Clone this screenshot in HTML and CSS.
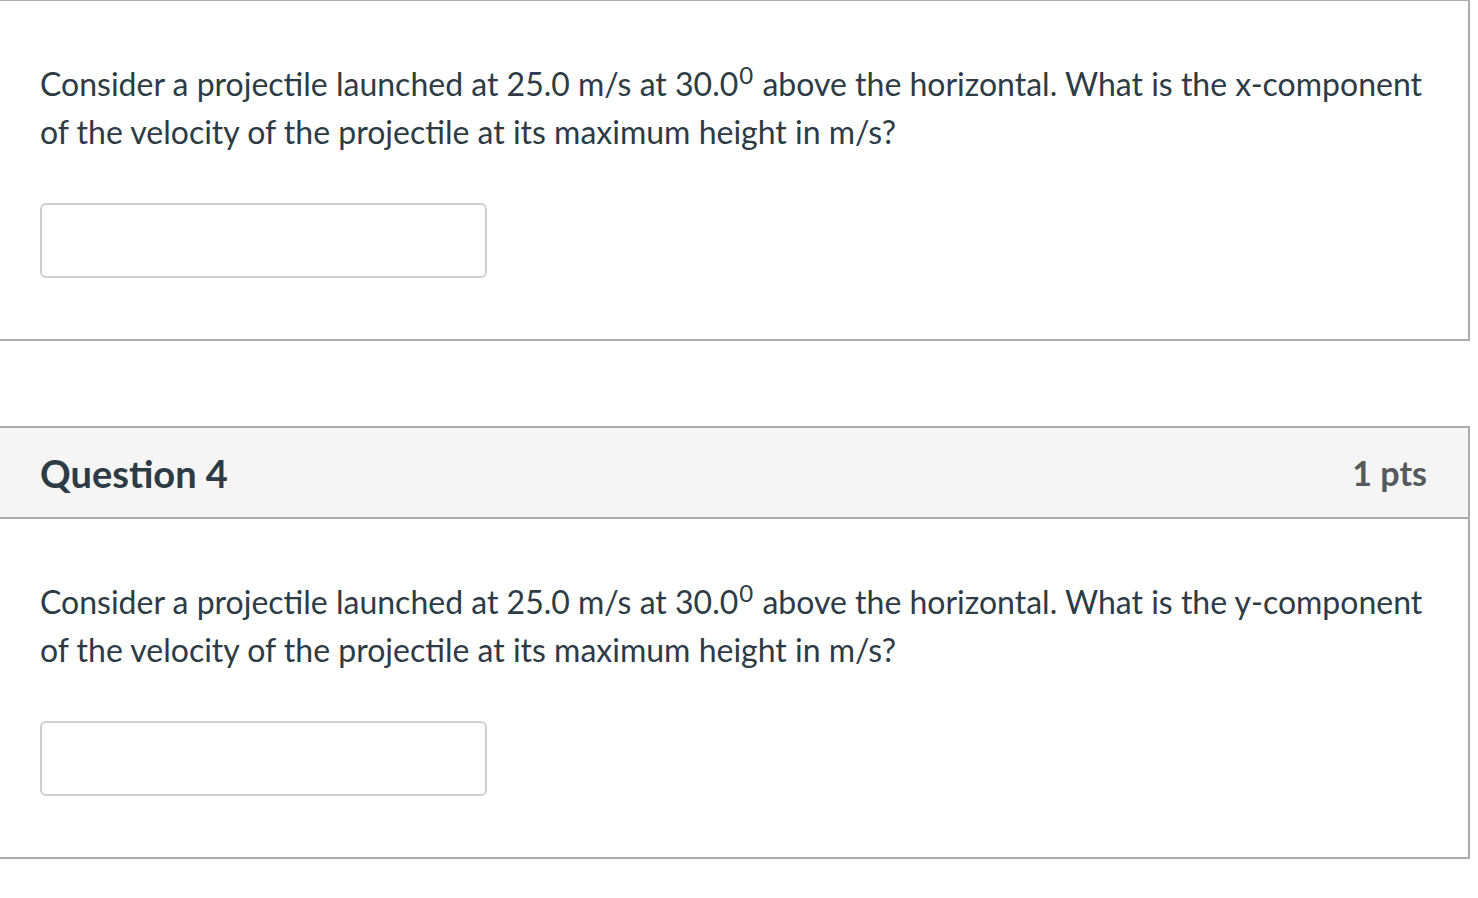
FILE: index.html
```html
<!DOCTYPE html>
<html>
<head>
<meta charset="utf-8">
<link rel="stylesheet" href="styles.css">
</head>
<body>
<div class="page">
  <div class="card card-first">
    <div class="card-body">
      <p class="question-text">Consider a projectile launched at 25.0 m/s at 30.0<sup>0</sup> above the horizontal. What is the x-component of the velocity of the projectile at its maximum height in m/s?</p>
      <input class="answer" type="text">
    </div>
  </div>
  <div class="card">
    <div class="card-header">
      <span class="q-title">Question 4</span>
      <span class="q-pts">1 pts</span>
    </div>
    <div class="card-body">
      <p class="question-text">Consider a projectile launched at 25.0 m/s at 30.0<sup>0</sup> above the horizontal. What is the y-component of the velocity of the projectile at its maximum height in m/s?</p>
      <input class="answer" type="text">
    </div>
  </div>
</div>
</body>
</html>
```
FILE: styles.css
```css
html, body {
  margin: 0;
  padding: 0;
  background: #ffffff;
}
body {
  font-family: Lato, "Open Sans", sans-serif;
  color: #2d3b45;
}
.page {
  width: 1470px;
  display: flex;
  flex-direction: column;
  gap: 85px;
}
.card {
  border: 2px solid #acacac;
  border-left: none;
  background: #fff;
}
.card-first {
  border-top-width: 1px;
}
.card-header {
  background: #f5f5f5;
  border-bottom: 2px solid #acacac;
  height: 89px;
  display: flex;
  align-items: center;
  justify-content: space-between;
  padding: 0 41px 0 40px;
}
.q-title {
  font-weight: 700;
  font-size: 38px;
}
.q-pts {
  font-weight: 700;
  font-size: 34px;
  color: #555a5e;
}
.card-body {
  padding: 59px 40px 61px 40px;
  display: flex;
  flex-direction: column;
  align-items: flex-start;
}
.question-text {
  margin: 0;
  font-size: 32px;
  line-height: 48px;
}
.question-text sup {
  font-size: 24px;
  line-height: 0;
  vertical-align: 0.5em;
  margin-left: 1px;
  margin-right: 1px;
}
.answer {
  margin-top: 47px;
  width: 447px;
  height: 75px;
  box-sizing: border-box;
  border: 2px solid #cfcfcf;
  border-radius: 6px;
  background: #fff;
  padding: 0;
  outline: none;
}
```
